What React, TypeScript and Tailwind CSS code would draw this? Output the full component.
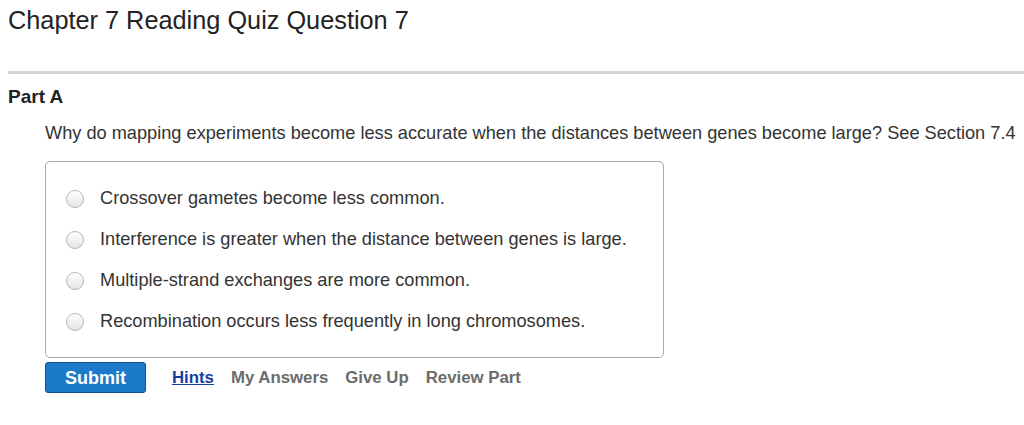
import React from "react";

const options = [
  "Crossover gametes become less common.",
  "Interference is greater when the distance between genes is large.",
  "Multiple-strand exchanges are more common.",
  "Recombination occurs less frequently in long chromosomes.",
];

function Radio() {
  return (
    <span className="inline-block shrink-0 w-[18px] h-[18px] rounded-full border border-[#b5b5b5] bg-gradient-to-b from-[#ffffff] to-[#e4e4e4] shadow-[inset_0_1px_1px_rgba(255,255,255,0.9)]" />
  );
}

export default function App() {
  return (
    <div className="w-[1024px] h-[425px] bg-white overflow-hidden text-[#333]" style={{ fontFamily: '"Liberation Sans", Arial, sans-serif' }}>
      <h1 className="pl-[8px] pt-[5px] text-[25.3px] leading-[30px] text-[#222] font-normal whitespace-nowrap">
        Chapter 7 Reading Quiz Question 7
      </h1>
      <div className="ml-[8px] mt-[36px] h-[3px] bg-[#d2d2d2]" />
      <h2 className="pl-[8px] mt-[12px] text-[19px] leading-[22px] font-bold text-[#222]">Part A</h2>
      <p className="pl-[45px] mt-[14px] text-[18.2px] leading-[22px] text-[#333] whitespace-nowrap">
        Why do mapping experiments become less accurate when the distances between genes become large? See Section 7.4
      </p>
      <div className="ml-[45px] mt-[17px] w-[619px] h-[197px] border border-[#a8a8a8] rounded-[5px] pt-[26px] pl-[20px]">
        <div className="flex flex-col gap-[20px]">
          {options.map((o) => (
            <label key={o} className="flex items-center gap-[16px] h-[21px] text-[18.2px] text-[#333] whitespace-nowrap">
              <Radio />
              <span>{o}</span>
            </label>
          ))}
        </div>
      </div>
      <div className="ml-[45px] mt-[4px] flex items-center">
        <button className="w-[101px] h-[31px] rounded-[3px] bg-[#1b7bca] border border-[#12508a] text-white font-bold text-[18px] leading-none">
          Submit
        </button>
        <a className="ml-[26px] text-[16.8px] font-bold text-[#143f9e] underline">Hints</a>
        <span className="ml-[17px] text-[16.8px] font-bold text-[#6b6b6b]">My Answers</span>
        <span className="ml-[17px] text-[16.8px] font-bold text-[#6b6b6b]">Give Up</span>
        <span className="ml-[17px] text-[16.8px] font-bold text-[#6b6b6b]">Review Part</span>
      </div>
    </div>
  );
}
